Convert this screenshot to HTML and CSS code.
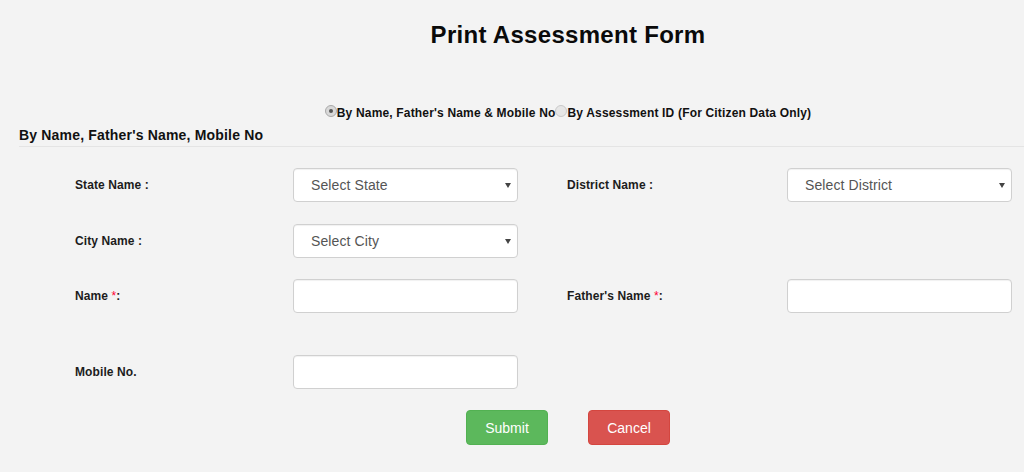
FILE: index.html
```html
<!DOCTYPE html>
<html lang="en">
<head>
<meta charset="utf-8">
<title>Print Assessment Form</title>
<link rel="stylesheet" href="styles.css">
</head>
<body>
  <h1 class="title">Print Assessment Form</h1>

  <div class="search-type">
    <label class="radio-opt"><input type="radio" name="stype" checked><span>By Name, Father's Name &amp; Mobile No</span></label>
    <label class="radio-opt"><input type="radio" name="stype"><span>By Assessment ID (For Citizen Data Only)</span></label>
  </div>

  <h2 class="section-head">By Name, Father's Name, Mobile No</h2>

  <form class="form">
    <div class="row">
      <label class="lbl">State Name :</label>
      <div class="select"><select><option>Select State</option></select></div>
      <span></span>
      <label class="lbl">District Name :</label>
      <div class="select"><select><option>Select District</option></select></div>
    </div>
    <div class="row">
      <label class="lbl">City Name :</label>
      <div class="select"><select><option>Select City</option></select></div>
    </div>
    <div class="row">
      <label class="lbl">Name <span class="req">*</span>:</label>
      <input class="input" type="text">
      <span></span>
      <label class="lbl">Father's Name <span class="req">*</span>:</label>
      <input class="input" type="text">
    </div>
    <div class="row row-spaced">
      <label class="lbl">Mobile No.</label>
      <input class="input" type="text">
    </div>
    <div class="actions">
      <button type="button" class="btn btn-success">Submit</button>
      <button type="button" class="btn btn-danger">Cancel</button>
    </div>
  </form>
</body>
</html>
```

FILE: styles.css
```css
* { box-sizing: border-box; }

html, body {
  margin: 0;
  padding: 0;
  background: #f3f3f3;
  font-family: "Liberation Sans", Arial, sans-serif;
  color: #222;
}

.title {
  margin: 22px 0 0;
  padding-left: 112px;
  text-align: center;
  font-size: 24px;
  line-height: 26px;
  font-weight: bold;
  letter-spacing: 0.3px;
  color: #0a0a0a;
}

.search-type {
  margin-top: 57px;
  padding-left: 112px;
  display: flex;
  justify-content: center;
  font-size: 12px;
  line-height: 16px;
  font-weight: bold;
  letter-spacing: 0.17px;
  color: #111;
}

.radio-opt {
  display: inline-flex;
  align-items: center;
}

.radio-opt input {
  appearance: none;
  -webkit-appearance: none;
  width: 12px;
  height: 12px;
  margin: 0 0 4px 0;
  border-radius: 50%;
  border: 1px solid #c9c9c9;
  background: #e6e6e6;
  position: relative;
}

.radio-opt input:checked {
  border-color: #a9a9a9;
  background: #d8d8d8;
}

.radio-opt input:checked::after {
  content: "";
  position: absolute;
  left: 3px;
  top: 3px;
  width: 4px;
  height: 4px;
  border-radius: 50%;
  background: #555;
}

.section-head {
  margin: 4px 0 0 19px;
  padding-bottom: 1px;
  font-size: 14px;
  line-height: 20px;
  font-weight: bold;
  letter-spacing: 0.18px;
  color: #111;
  border-bottom: 1px solid #e4e4e4;
}

.form {
  margin-top: 21px;
  padding-left: 75px;
  display: flex;
  flex-direction: column;
  gap: 21.5px;
}

.row {
  display: grid;
  grid-template-columns: 218px 225px 49px 220px 225px;
  align-items: center;
  height: 34px;
}

.row-spaced { margin-top: 20.5px; }

.lbl {
  font-size: 12px;
  font-weight: bold;
  letter-spacing: 0.1px;
  color: #1c1c1c;
}

.req { color: #f03; font-weight: normal; }

.select { position: relative; height: 34px; }

.select select,
.input {
  display: block;
  width: 225px;
  height: 34px;
  border: 1px solid #d0d0d0;
  border-radius: 4px;
  background: #fff;
  box-shadow: inset 0 1px 1px rgba(0,0,0,.06);
  font-family: "Liberation Sans", Arial, sans-serif;
  font-size: 14px;
  color: #555;
  outline: none;
}

.select select {
  appearance: none;
  -webkit-appearance: none;
  padding: 0 20px 0 17px;
  letter-spacing: 0.1px;
}

.select::after {
  content: "";
  position: absolute;
  right: 7px;
  top: 15px;
  border-left: 3px solid transparent;
  border-right: 3px solid transparent;
  border-top: 5px solid #444;
}

.input { padding: 0 12px; }

.actions {
  margin-top: -0.5px;
  padding-left: 112px;
  display: flex;
  justify-content: center;
  gap: 40px;
  margin-left: -75px;
}

.btn {
  width: 82px;
  height: 35px;
  border-radius: 4px;
  border: 1px solid transparent;
  font-family: "Liberation Sans", Arial, sans-serif;
  font-size: 14px;
  color: #fff;
  cursor: pointer;
}

.btn-success { background: #5cb85c; border-color: #52b152; }
.btn-danger { background: #d9534f; border-color: #d4463f; }
```
